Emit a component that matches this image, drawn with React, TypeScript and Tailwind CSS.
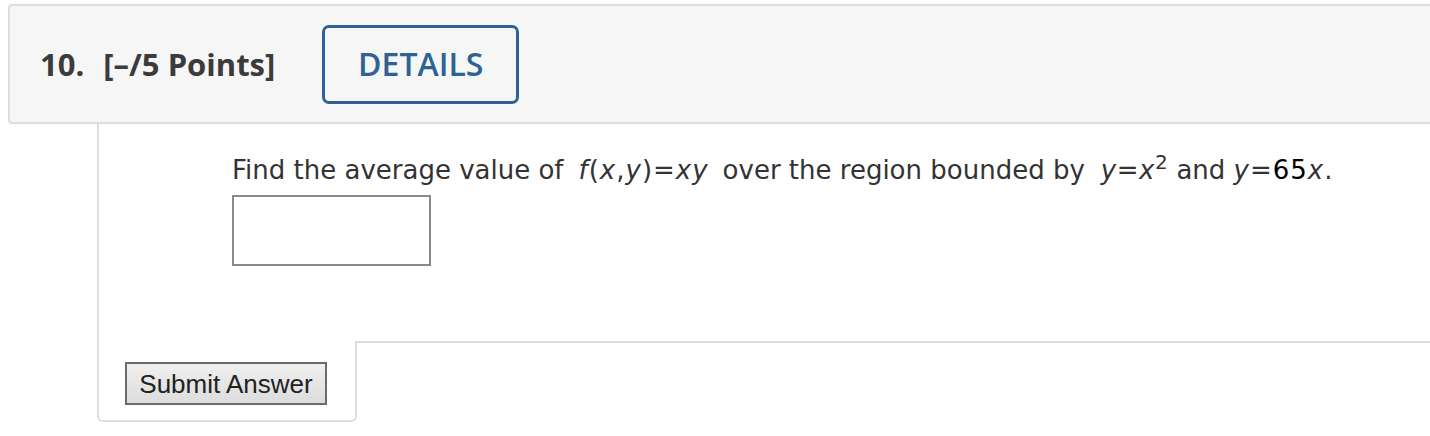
export default function App() {
  const mi = "italic";
  return (
    <div className="w-[1430px] h-[436px] overflow-hidden bg-white pt-[4px] pl-[8px]">
      {/* question header */}
      <div className="flex h-[120px] items-center rounded-l-[4px] border-2 border-r-0 border-[#dedede] bg-[#f6f6f6] pl-[30px] text-[#3b3b3b] font-['Open_Sans',sans-serif]">
        <span className="text-[31px] font-bold">10.</span>
        <span className="ml-[19px] text-[31px] font-bold">[–/5 Points]</span>
        <button className="ml-[47px] h-[79px] w-[197px] rounded-[7px] border-[3px] border-[#2c6394] text-[32px] font-semibold text-[#2c6394]">
          DETAILS
        </button>
      </div>

      {/* question body */}
      <div className="ml-[89px]">
        <div className="h-[217px] border-l-2 border-[#dddddd] pl-[133px] pt-[28px]">
          <p className="text-[26px] leading-[36px] text-[#333333] font-['DejaVu_Sans','Verdana',sans-serif] whitespace-nowrap">
            Find the average value of
            <span className="ml-[15px] mr-[14px] tracking-[1px]">
              <span className={mi}>f</span>(<span className={mi}>x</span>,<span className={mi}>y</span>)=<span className={mi}>xy</span>
            </span>
            over the region bounded by
            <span className="ml-[16px] tracking-[0.5px]">
              <span className={mi}>y</span>=<span className={mi}>x</span>
              <sup className="text-[20px]">2</sup>
            </span>{" "}
            and{" "}
            <span className="tracking-[1px]">
              <span className={mi}>y</span>=<span className="text-black">65</span>
              <span className={mi}>x</span>.
            </span>
          </p>
          <input
            type="text"
            className="mt-[7px] block h-[71px] w-[199px] border-2 border-[#8a8a8a] bg-white outline-none"
          />
        </div>

        <div className="flex">
          <div className="h-[81px] w-[260px] rounded-b-[6px] border-2 border-t-0 border-[#dddddd] pl-[26px] pt-[21px]">
            <button className="h-[43px] w-[202px] border-2 border-[#6b6b6b] bg-gradient-to-b from-[#f0f0f0] to-[#dcdcdc] text-[26px] leading-none text-[#222222] font-['Liberation_Sans',Arial,sans-serif]">
              Submit Answer
            </button>
          </div>
          <div className="-ml-[2px] flex-1 border-t-2 border-[#dddddd]" />
        </div>
      </div>
    </div>
  );
}
